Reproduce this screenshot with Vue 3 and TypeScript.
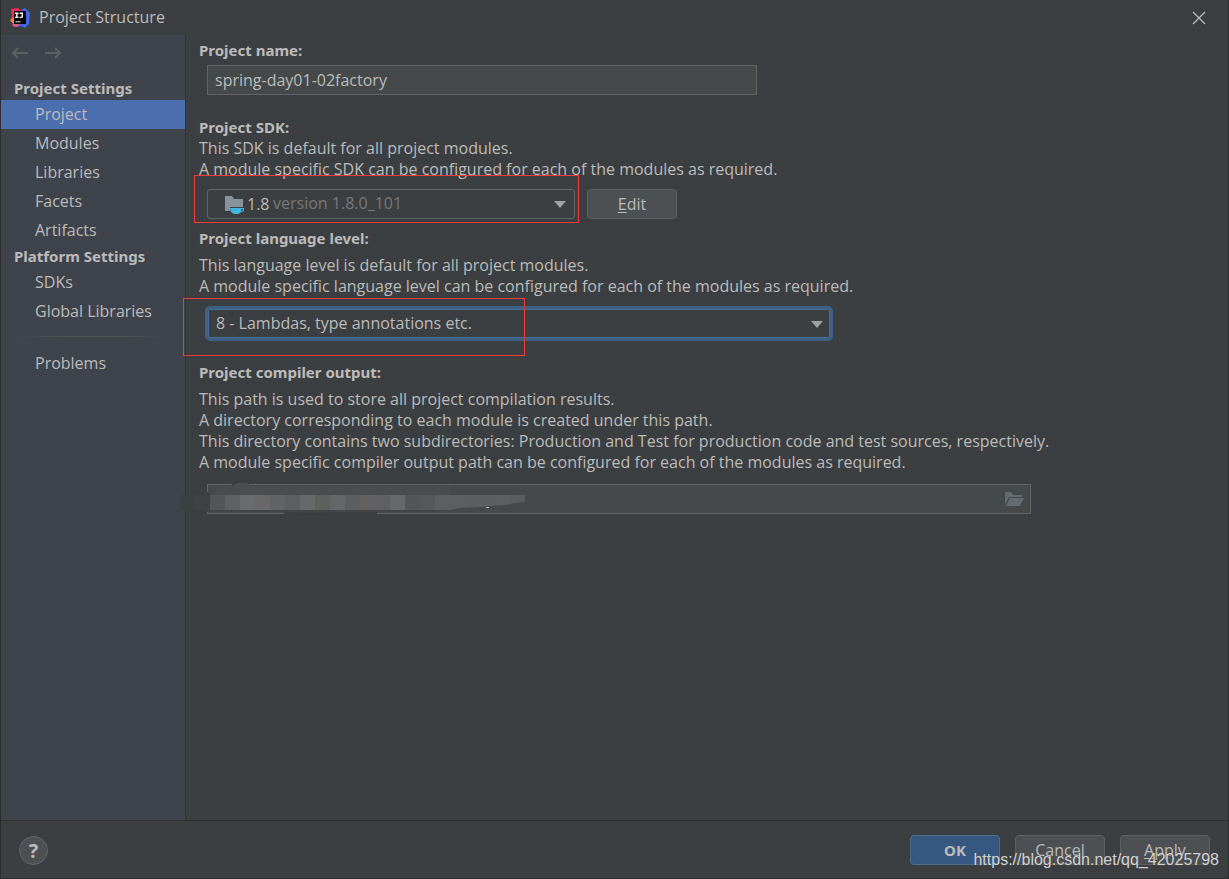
<script setup lang="ts">
import { ref } from 'vue'

interface NavGroup {
  title: string
  items: string[]
}

const groups: NavGroup[] = [
  { title: 'Project Settings', items: ['Project', 'Modules', 'Libraries', 'Facets', 'Artifacts'] },
  { title: 'Platform Settings', items: ['SDKs', 'Global Libraries'] },
]

const active = ref('Project')
const projectName = ref('spring-day01-02factory')
const sdk = ref('1.8')
const languageLevel = ref('8')
const outputPath = ref('')

const mosaic = [
  '#3d4042', '#3f4244', '#535657', '#5e6162', '#6a6b6d', '#686868', '#616465', '#5c5f60',
  '#656768', '#5e605e', '#646768', '#5b5e60', '#606160', '#5e6061', '#666768', '#535657',
  '#55585a', '#5c5f60', '#5c5f60', '#5b5e60', '#5b5e5f', '#5c5e5f', '#5a5d5e',
]
</script>

<template>
  <div class="dialog">
    <header class="titlebar">
      <svg class="logo" viewBox="0 0 20 20" aria-hidden="true">
        <defs>
          <linearGradient id="logo-warm" x1="0" y1="0" x2="0" y2="1">
            <stop offset="0" stop-color="#fe2857" />
            <stop offset="0.45" stop-color="#f5315f" />
            <stop offset="0.6" stop-color="#fc801d" />
            <stop offset="0.75" stop-color="#fc801d" />
            <stop offset="0.9" stop-color="#e0528c" />
          </linearGradient>
          <linearGradient id="logo-cool" x1="0" y1="0" x2="1" y2="1">
            <stop offset="0" stop-color="#9135e0" />
            <stop offset="0.4" stop-color="#3b6cf0" />
            <stop offset="1" stop-color="#4a5de8" />
          </linearGradient>
        </defs>
        <path fill="url(#logo-cool)" d="M10 3l5-3 5 5-1 11-4 4-4-2-4 1-4-1 7-3z" />
        <path fill="url(#logo-warm)" d="M1 1 8 0l4 4-2 12-3 3-5-1 1-3-3-2 2-4z" />
        <path fill="#080808" d="M4 3h12v13H4z" />
        <path fill="none" stroke="#fff" stroke-width="1.4" d="M5 5.2h3.600M6.800 5v4.600M5 9.400h3.600M9.700 5.200h2.600v3.200q0 1-1.200 1H9.600" />
        <path fill="#ddd" d="M5.500 13.300h5v1h-5z" />
      </svg>
      <h1>Project Structure</h1>
      <button class="close" type="button" aria-label="Close">
        <svg viewBox="0 0 14 14" aria-hidden="true"><path d="M1 1l12 12M13 1 1 13" /></svg>
      </button>
    </header>

    <div class="body">
      <nav class="sidebar" aria-label="Settings sections">
        <div class="history">
          <button type="button" aria-label="Back" disabled>
            <svg viewBox="0 0 18 14" aria-hidden="true"><path d="M17 7H2M7 2 2 7l5 5" /></svg>
          </button>
          <button type="button" aria-label="Forward" disabled>
            <svg viewBox="0 0 18 14" aria-hidden="true"><path d="M1 7h15M11 2l5 5-5 5" /></svg>
          </button>
        </div>
        <template v-for="group in groups" :key="group.title">
          <h2>{{ group.title }}</h2>
          <ul>
            <li v-for="item in group.items" :key="item">
              <a href="#" :class="{ active: item === active }" @click.prevent="active = item">{{ item }}</a>
            </li>
          </ul>
        </template>
        <hr />
        <ul>
          <li>
            <a href="#" :class="{ active: active === 'Problems' }" @click.prevent="active = 'Problems'">Problems</a>
          </li>
        </ul>
      </nav>

      <main class="content">
        <section class="name">
          <label for="project-name">Project name:</label>
          <input id="project-name" v-model="projectName" type="text" />
        </section>

        <section class="sdk">
          <label for="project-sdk">Project SDK:</label>
          <p>This SDK is default for all project modules.<br />A module specific SDK can be configured for each of the modules as required.</p>
          <div class="row">
            <div class="combo sdk-combo">
              <select id="project-sdk" v-model="sdk">
                <option value="1.8">1.8</option>
              </select>
              <svg class="folder" viewBox="0 0 20 18" aria-hidden="true">
                <path fill="#87939a" d="M0 0h7l2 3h9v8H5v4H0z" />
                <path fill="#40b6e0" d="M5 12h14v1.5q0 2.5-3 2.5-1 2-3.500 2H9.500Q5 17 5 12zm11 1v2q2 0 2-2z" fill-rule="evenodd" />
              </svg>
              <span class="version">version 1.8.0_101</span>
              <svg class="arrow" viewBox="0 0 12 7" aria-hidden="true"><path d="M0 0h12L6 7z" /></svg>
              <i class="mark sdk-mark"></i>
            </div>
            <button class="btn" type="button"><u>E</u>dit</button>
          </div>
        </section>

        <section class="level">
          <label for="language-level">Project language level:</label>
          <p>This language level is default for all project modules.<br />A module specific language level can be configured for each of the modules as required.</p>
          <div class="combo level-combo">
            <select id="language-level" v-model="languageLevel">
              <option value="8">8 - Lambdas, type annotations etc.</option>
            </select>
            <svg class="arrow" viewBox="0 0 12 7" aria-hidden="true"><path d="M0 0h12L6 7z" /></svg>
            <i class="mark level-mark"></i>
          </div>
        </section>

        <section class="output">
          <label for="output-path">Project compiler output:</label>
          <p>This path is used to store all project compilation results.<br />A directory corresponding to each module is created under this path.<br />This directory contains two subdirectories: Production and Test for production code and test sources, respectively.<br />A module specific compiler output path can be configured for each of the modules as required.</p>
          <div class="path">
            <input id="output-path" v-model="outputPath" type="text" />
            <svg class="mosaic" viewBox="0 0 345 32" aria-hidden="true">
              <path fill="#3c3f41" d="M52 0h17v3H52zM27 9h3v18h-3zM104 29h45l48-1v3h-93z" />
              <path fill="#414547" d="M27 27h246l-20 2H160l-28 1-30-1H27z" />
              <path fill="#494d4e" d="M35 5l18-2 4-3h10l3 3h200v9H35z" />
              <rect v-for="(color, i) in mosaic" :key="i" :x="i * 15" y="12" width="15" height="15" :fill="color" />
              <path fill="#45494a" d="M270 27l10-2 20-1 25-2 10-2 10-1v8z" />
              <path fill="#bbb" d="M306 24h3v1h-3z" />
            </svg>
            <button type="button" class="browse" aria-label="Browse">
              <svg viewBox="0 0 19 15" aria-hidden="true">
                <path d="M0 13V0h6l2 3h9v2H4z" />
                <path d="M5 6h14l-4 8H1z" />
              </svg>
            </button>
          </div>
        </section>
      </main>
    </div>

    <footer class="footer">
      <button class="help" type="button" aria-label="Help">?</button>
      <div class="actions">
        <button class="btn primary" type="button">OK</button>
        <button class="btn" type="button">Cancel</button>
        <button class="btn" type="button"><u>A</u>pply</button>
      </div>
      <span class="watermark">https://blog.csdn.net/qq_42025798</span>
    </footer>
  </div>
</template>

<style>
body {
  background: #3c3f41;
}
</style>

<style scoped>
.dialog,
.dialog * {
  box-sizing: border-box;
}
.dialog {
  display: flex;
  flex-direction: column;
  min-height: 100vh;
  border: 1px solid #2b2d2e;
  border-top: 0;
  background: #3c3f41;
  color: #bbbbbb;
  font: 16px/21px "Open Sans", "Noto Sans", sans-serif;
}
button,
input,
select {
  margin: 0;
  font: inherit;
  color: inherit;
}
h1,
h2,
p,
ul {
  margin: 0;
  padding: 0;
  font-size: 16px;
}
ul {
  list-style: none;
}
h2,
label,
.btn.primary {
  font: 700 15px/21px "Noto Sans", sans-serif;
}
.titlebar {
  display: flex;
  align-items: center;
  gap: 9px;
  height: 35px;
  padding: 0 20px 0 9px;
}
.logo {
  width: 20px;
  height: 20px;
}
h1 {
  flex: 1;
  font-weight: 400;
}
.close {
  width: 18px;
  height: 18px;
  padding: 2px;
  border: 0;
  background: none;
}
svg {
  display: block;
}
.close path {
  fill: none;
  stroke: #bbbbbb;
  stroke-width: 1.3;
}
.body {
  display: flex;
  flex: 1;
}
.sidebar {
  flex: none;
  width: 185px;
  border-right: 1px solid #323537;
  background: #3f434c;
}
.history {
  display: flex;
  gap: 14px;
  height: 42px;
  padding: 11px 10px;
}
.history button {
  width: 19px;
  height: 14px;
  padding: 0;
  border: 0;
  background: none;
}
.history svg {
  width: 18px;
  height: 14px;
}
.history path {
  fill: none;
  stroke: #5e6062;
  stroke-width: 2;
}
h2 {
  padding-left: 13px;
  line-height: 23px;
}
.sidebar a {
  display: block;
  padding-left: 34px;
  color: inherit;
  line-height: 29px;
  text-decoration: none;
}
.sidebar a.active {
  background: #4b6eaf;
}
hr {
  height: 1px;
  margin: 10px 14px 12px;
  border: 0;
  background: linear-gradient(90deg, transparent, #515355 30%, #515355 70%, transparent);
}
.content {
  flex: 1;
  padding: 5px 13px;
}
label {
  display: block;
}
input {
  display: block;
  width: 100%;
  height: 30px;
  padding: 0 7px;
  border: 1px solid #646464;
  background: #45494a;
}
.name input {
  max-width: 550px;
  margin: 4px 8px 0;
}
.sdk {
  margin-top: 22px;
}
.row {
  display: flex;
  gap: 12px;
  margin: 9px 8px 0;
}
.combo {
  position: relative;
}
select {
  display: block;
  width: 100%;
  height: 30px;
  border: 1px solid #646464;
  border-radius: 3px;
  background: #3c3f41;
  appearance: none;
  outline: none;
}
.sdk-combo {
  width: 368px;
}
.sdk-combo select {
  padding: 0 39px;
}
.arrow {
  position: absolute;
  top: 50%;
  right: 9px;
  width: 12px;
  height: 7px;
  margin-top: -3px;
  fill: #9da0a2;
  pointer-events: none;
}
.folder {
  position: absolute;
  top: 7px;
  left: 18px;
  width: 20px;
  height: 18px;
  pointer-events: none;
}
.version {
  position: absolute;
  top: 4px;
  left: 66px;
  color: #787878;
  pointer-events: none;
}
.mark {
  position: absolute;
  z-index: 1;
  border: 1px solid #f33b3b;
  pointer-events: none;
}
.sdk-mark {
  inset: -14px -4px -4px -13px;
}
.btn {
  width: 90px;
  height: 30px;
  padding: 0;
  border: 1px solid #5e6060;
  border-radius: 4px;
  background: #4c5052;
}
.btn.primary {
  border-color: #4c708c;
  background: #365880;
}
.btn u {
  text-underline-offset: 2px;
}
.level {
  margin-top: 9px;
}
.level p,
.output p {
  margin-top: 6px;
}
.level-combo {
  max-width: 628px;
  margin: 9px 6px 0;
}
.level-combo select {
  height: 35px;
  padding: 0 8px;
  border: 3px solid #3d6185;
  border-radius: 5px;
  box-shadow: inset 0 0 0 1px #466d94;
}
.level-combo .arrow {
  right: 10px;
}
.level-mark {
  top: -8px;
  left: -22px;
  width: 342px;
  height: 58px;
}
.output {
  margin-top: 21px;
}
.path {
  position: relative;
  max-width: 824px;
  margin: 11px 8px 0;
}
.path input {
  padding-right: 36px;
}
.mosaic {
  position: absolute;
  top: -1px;
  left: -27px;
  width: 345px;
  height: 32px;
  pointer-events: none;
}
.browse {
  position: absolute;
  top: 8px;
  right: 7px;
  width: 19px;
  height: 15px;
  padding: 0;
  border: 0;
  background: none;
}
.browse path {
  fill: #656c70;
}
.footer {
  position: relative;
  display: flex;
  align-items: center;
  justify-content: space-between;
  height: 58px;
  padding: 1px 18px 0;
  border-top: 1px solid #323232;
}
.help {
  width: 29px;
  height: 29px;
  padding: 0;
  border: 1px solid #646668;
  border-radius: 50%;
  background: #4c5052;
  font-size: 20px;
  font-weight: 700;
}
.actions {
  display: flex;
  gap: 15px;
}
.watermark {
  position: absolute;
  right: 9px;
  bottom: 8px;
  color: #d2d2d2;
  font: 16px/21px "Liberation Sans", sans-serif;
  text-shadow: 0 1px 1px #444;
  pointer-events: none;
}
</style>
